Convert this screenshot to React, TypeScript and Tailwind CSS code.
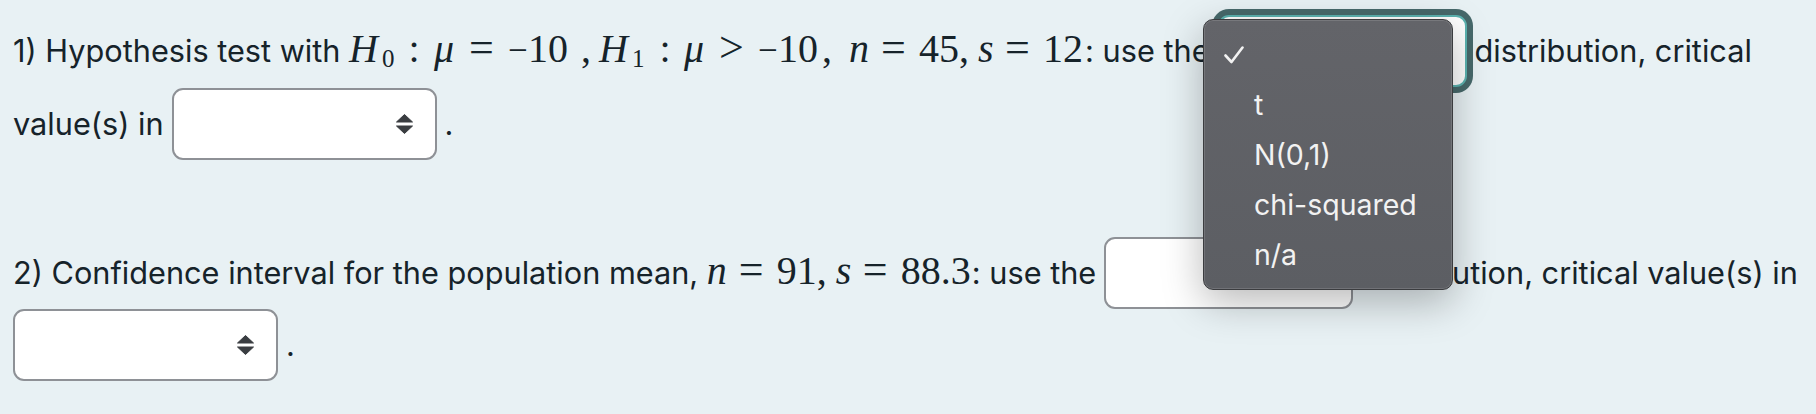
import type { ReactNode } from 'react'

const serif = "[font-family:'Liberation_Serif','Times_New_Roman',serif] leading-none inline-block"

// one math token; the width class keeps TeX-like spacing between glyphs
function M({ children, w, it = false, op = false }: { children: ReactNode; w: string; it?: boolean; op?: boolean }) {
  return <span className={`${serif} ${op ? 'text-[44px]' : 'text-[40px]'} ${it ? 'italic' : ''} ${w}`}>{children}</span>
}

function Minus({ w }: { w: string }) {
  return <span className={`${serif} text-[35px] ${w}`}>−</span>
}

function Sub({ children, w }: { children: ReactNode; w: string }) {
  return (
    <span className={`[font-family:'Liberation_Serif',serif] text-[25px] leading-none inline-block align-[-5px] ${w}`}>
      {children}
    </span>
  )
}

function Arrows() {
  return (
    <svg width="17" height="20" viewBox="0 0 17 20" className="absolute right-[24px] top-1/2 -translate-y-1/2 pointer-events-none">
      <path d="M8.5 0.5 L16.5 8 L0.5 8 Z" fill="#3a3d41" strokeLinejoin="round" stroke="#3a3d41" strokeWidth="1" />
      <path d="M0.5 12 L16.5 12 L8.5 19.5 Z" fill="#3a3d41" strokeLinejoin="round" stroke="#3a3d41" strokeWidth="1" />
    </svg>
  )
}

function Select({
  wide = false,
  focused = false,
  arrows = true,
  className = 'mx-[8px]',
}: {
  wide?: boolean
  focused?: boolean
  arrows?: boolean
  className?: string
}) {
  return (
    <span className={`relative inline-flex shrink-0 h-[72px] ${wide ? 'w-[265px]' : 'w-[249px]'} ${className}`}>
      <select
        aria-label="choice"
        className={`appearance-none w-full h-full bg-white rounded-[11px] border-2 outline-none ${
          focused ? 'border-[#5cb3b0] shadow-[0_0_0_6px_#47696b]' : 'border-[#8e9196]'
        }`}
        defaultValue=""
      >
        <option value=""></option>
        <option value="t">t</option>
        <option value="z">N(0,1)</option>
        <option value="chi">chi-squared</option>
        <option value="na">n/a</option>
      </select>
      {arrows && <Arrows />}
    </span>
  )
}

function Check() {
  return (
    <svg width="20" height="18" viewBox="0 0 20 18">
      <path d="M1.5 9.5 L7.5 16 L18.5 1.5" fill="none" stroke="#f2f2f2" strokeWidth="2.6" strokeLinecap="round" strokeLinejoin="round" />
    </svg>
  )
}

const options = ['', 't', 'N(0,1)', 'chi-squared', 'n/a']

function Popup() {
  return (
    <div className="absolute left-[1203px] top-[19px] w-[250px] h-[271px] rounded-[10px] border border-[#3b3c3f] bg-gradient-to-b from-[#636469] to-[#5c5e63] shadow-[inset_0_0_0_1px_rgba(255,255,255,0.13),0_12px_40px_rgba(0,0,0,0.28)] pt-[10px] text-[#f2f2f2] text-[28.5px]">
      {options.map((o, i) => (
        <div key={o || 'blank'} className="flex items-center h-[50px] pl-[20px]">
          <span className="w-[30px] flex items-center">{i === 0 && <Check />}</span>
          <span className="leading-[50px]">{o}</span>
        </div>
      ))}
    </div>
  )
}

export default function App() {
  return (
    <div className="relative min-h-screen bg-[#e8f1f4] text-[#16232a] text-[30.7px] [font-family:Inter,'Noto_Sans',sans-serif] pl-[13px] pt-[15px]">
      <div>
        <div className="flex items-center h-[72px] whitespace-nowrap">
          <span className="leading-[72px]">
            {'1) Hypothesis test with '}
            <M it w="w-[33px]">H</M>
            <Sub w="w-[26.5px]">0</Sub>
            <M w="w-[25.5px]">:</M>
            <M it w="w-[35px]">μ</M>
            <M op w="w-[39px]">=</M>
            <Minus w="w-[20px]" />
            <M w="w-[53px]">10</M>
            <M w="w-[18px]">,</M>
            <M it w="w-[33px]">H</M>
            <Sub w="w-[27.5px]">1</Sub>
            <M w="w-[24.5px]">:</M>
            <M it w="w-[35px]">μ</M>
            <M op w="w-[39px]">&gt;</M>
            <Minus w="w-[20px]" />
            <M w="w-[44px]">10</M>
            <M w="w-[27px]">,</M>
            <M it w="w-[32px]">n</M>
            <M op w="w-[38px]">=</M>
            <M w="w-[40px]">45</M>
            <M w="w-[19px]">,</M>
            <M it w="w-[27px]">s</M>
            <M op w="w-[38px]">=</M>
            <M w="w-[42px]">12</M>
            {': use the'}
          </span>
          <Select focused arrows={false} />
          <span className="leading-[72px]">distribution, critical</span>
        </div>
        <div className="mt-[1px] flex items-center h-[72px] whitespace-nowrap">
          <span className="leading-[72px]">value(s) in</span>
          <Select wide />
          <span className="leading-[72px]">.</span>
        </div>
      </div>

      <div className="mt-[77px]">
        <div className="flex items-center h-[72px] whitespace-nowrap">
          <span className="leading-[72px]">
            {'2) Confidence interval for the population mean, '}
            <M it w="w-[32px]">n</M>
            <M op w="w-[38px]">=</M>
            <M w="w-[40px]">91</M>
            <M w="w-[19px]">,</M>
            <M it w="w-[27px]">s</M>
            <M op w="w-[38px]">=</M>
            <M w="w-[71px]">88.3</M>
            {': use the'}
          </span>
          <Select arrows={false} />
          <span className="leading-[72px]">distribution, critical value(s) in</span>
        </div>
        <div className="flex items-center h-[72px] whitespace-nowrap">
          <Select wide className="mr-[8px]" />
          <span className="leading-[72px]">.</span>
        </div>
      </div>

      <Popup />
    </div>
  )
}
